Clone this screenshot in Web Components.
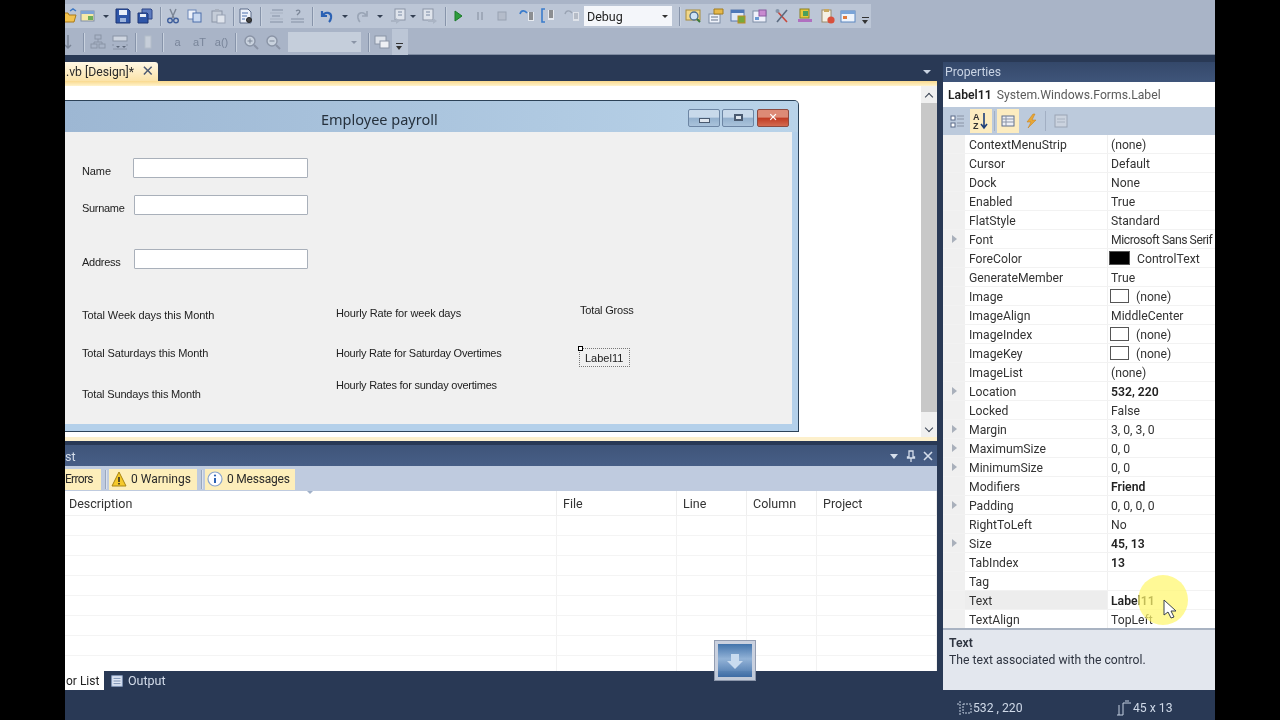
<!DOCTYPE html>
<html>
<head>
<meta charset="utf-8">
<title>Employee payroll</title>
<style>
  html, body { margin: 0; background: #000; }
  body { width: 1280px; height: 720px; overflow: hidden; font: 12px Roboto, "Noto Sans", sans-serif; color: #1e1e1e; }
</style>
</head>
<body>
<vs-app>
  <vs-toolbars slot="top"></vs-toolbars>
  <vs-docbar slot="left"></vs-docbar>
  <vs-designer slot="left">
    <form-window caption="Employee payroll">
      <form-label x="17" y="33" ls="-.1">Name</form-label>
      <form-input x="68" y="26" w="175"></form-input>
      <form-label x="17" y="70" ls="-.3">Surname</form-label>
      <form-input x="69" y="63" w="174"></form-input>
      <form-label x="17" y="124" ls="-.25">Address</form-label>
      <form-input x="69" y="117" w="174"></form-input>
      <form-label x="17" y="177" ls="-.08">Total Week days this Month</form-label>
      <form-label x="17" y="215" ls="-.13">Total Saturdays this Month</form-label>
      <form-label x="17" y="256" ls="-.17">Total Sundays this Month</form-label>
      <form-label x="271" y="175" ls="-.16">Hourly Rate for week days</form-label>
      <form-label x="271" y="215" ls="-.26">Hourly Rate for Saturday Overtimes</form-label>
      <form-label x="271" y="247" ls="-.24">Hourly Rates for sunday overtimes</form-label>
      <form-label x="515" y="172" ls="-.18">Total Gross</form-label>
      <form-label x="519" y="219" selected>Label11</form-label>
    </form-window>
  </vs-designer>
  <vs-errorlist slot="left"></vs-errorlist>
  <vs-bottomtabs slot="left"></vs-bottomtabs>
  <vs-properties slot="right">
    <prop-row name="ContextMenuStrip" value="(none)"></prop-row>
    <prop-row name="Cursor" value="Default"></prop-row>
    <prop-row name="Dock" value="None"></prop-row>
    <prop-row name="Enabled" value="True"></prop-row>
    <prop-row name="FlatStyle" value="Standard"></prop-row>
    <prop-row name="Font" value="Microsoft Sans Serif" expand ls="-.45"></prop-row>
    <prop-row name="ForeColor" value="ControlText" swatch="#000"></prop-row>
    <prop-row name="GenerateMember" value="True"></prop-row>
    <prop-row name="Image" value="(none)" swatch="#fff"></prop-row>
    <prop-row name="ImageAlign" value="MiddleCenter"></prop-row>
    <prop-row name="ImageIndex" value="(none)" swatch="#fff"></prop-row>
    <prop-row name="ImageKey" value="(none)" swatch="#fff"></prop-row>
    <prop-row name="ImageList" value="(none)"></prop-row>
    <prop-row name="Location" value="532, 220" expand bold></prop-row>
    <prop-row name="Locked" value="False"></prop-row>
    <prop-row name="Margin" value="3, 0, 3, 0" expand></prop-row>
    <prop-row name="MaximumSize" value="0, 0" expand></prop-row>
    <prop-row name="MinimumSize" value="0, 0" expand></prop-row>
    <prop-row name="Modifiers" value="Friend" bold></prop-row>
    <prop-row name="Padding" value="0, 0, 0, 0" expand></prop-row>
    <prop-row name="RightToLeft" value="No"></prop-row>
    <prop-row name="Size" value="45, 13" expand bold></prop-row>
    <prop-row name="TabIndex" value="13" bold></prop-row>
    <prop-row name="Tag" value=""></prop-row>
    <prop-row name="Text" value="Label11" bold active></prop-row>
    <prop-row name="TextAlign" value="TopLeft"></prop-row>
  </vs-properties>
</vs-app>

<script>
// 16x16 toolbar glyphs
const ICONS = {
  folder: '<path d="M1 5h5l1 2h7l-2 7H1z" fill="#f2c24e" stroke="#a97b1c"/><path d="M8 3l3-2 3 2" fill="none" stroke="#3d78c4" stroke-width="1.5"/>',
  newproj: '<rect x="1" y="3" width="13" height="10" fill="#f6e9a8" stroke="#7f8ea6"/><rect x="1" y="3" width="13" height="3" fill="#7fa3d4"/><rect x="8" y="8" width="5" height="4" fill="#6fae5a"/>',
  save: '<path d="M1 1h12l2 2v12H1z" fill="#2f56a8" stroke="#1d3474"/><rect x="4" y="2" width="8" height="5" fill="#e8eef8"/><rect x="5" y="10" width="6" height="4" fill="#9db4dc"/>',
  saveall: '<path d="M5 1h9l1 1v9H5z" fill="#5e7cc0" stroke="#2c4486"/><path d="M1 5h9l1 1v9H1z" fill="#2f56a8" stroke="#1d3474"/><rect x="3" y="6" width="6" height="3" fill="#e8eef8"/>',
  cut: '<path d="M5 1l4 9M11 1l-4 9" stroke="#7a8494" stroke-width="1.4" fill="none"/><circle cx="5" cy="12.5" r="2.3" fill="none" stroke="#3e5e9c" stroke-width="1.4"/><circle cx="11" cy="12.5" r="2.3" fill="none" stroke="#3e5e9c" stroke-width="1.4"/>',
  copy: '<rect x="1" y="2" width="8" height="9" fill="#eef2fa" stroke="#6b86b8"/><rect x="6" y="5" width="8" height="9" fill="#c8d8f0" stroke="#4d6eaa"/>',
  paste: '<rect x="2" y="3" width="10" height="11" fill="#c4ccd8" stroke="#8a94a6"/><rect x="5" y="1" width="4" height="3" fill="#a8b0be"/><rect x="7" y="7" width="8" height="8" fill="#dfe4ec" stroke="#98a2b4"/>',
  find: '<path d="M2 1h8l3 3v11H2z" fill="#eef2fa" stroke="#5a6a88"/><path d="M4 5h6M4 8h5M4 11h3" stroke="#4d6eaa"/><circle cx="11" cy="12" r="2.5" fill="#444" stroke="#222"/>',
  lines: '<path d="M3 2h11M3 8h8M1 14h13" stroke="#8490a4" stroke-width="1.2" fill="none"/><path d="M1 5h13M1 11h13" stroke="#a8b2c2" fill="none"/>',
  comment: '<path d="M1 14h13M1 11h13" stroke="#8490a4" fill="none"/><path d="M6 3c3-2 5 0 3 2L7 7M7 9h.1" stroke="#7c8798" stroke-width="1.3" fill="none"/>',
  undo: '<path d="M3 3v5h5M3.5 8C6 3 13 4 12 10c-.3 1.5-1 3-2 4" fill="none" stroke="#2c62b4" stroke-width="2.2"/>',
  redo: '<path d="M13 3v5H8M12.5 8C10 3 3 4 4 10c.3 1.5 1 3 2 4" fill="none" stroke="#9aa5b6" stroke-width="1.7"/>',
  drop: '<path d="M5 7h6l-3 3z" fill="#333f52"/>',
  navb: '<rect x="5" y="1" width="10" height="11" fill="#dfe4ec" stroke="#8a94a6"/><path d="M8 4h4M8 7h4" stroke="#7a8aa4"/><path d="M1 12h5v-2l4 3-4 3v-2H1z" fill="#aab4c4"/>',
  navf: '<rect x="1" y="1" width="10" height="11" fill="#dfe4ec" stroke="#8a94a6"/><path d="M4 4h4M4 7h4" stroke="#7a8aa4"/><path d="M6 12h5v-2l4 3-4 3v-2H6z" fill="#aab4c4"/>',
  play: '<path d="M5 3l7 5-7 5z" fill="#2d9c3c" stroke="#1c7a2a"/>',
  pause: '<path d="M5 4v8M9 4v8" stroke="#98a2b2" stroke-width="1.6"/>',
  stop: '<rect x="4" y="4" width="8" height="8" fill="#b4bcca" stroke="#98a2b2"/>',
  step1: '<rect x="9" y="4" width="6" height="9" fill="#e6eaf0"/><path d="M10 5h4M10 7h4M10 9h4M10 11h4" stroke="#333"/><path d="M1 6c1-4 5-4 7-1" fill="none" stroke="#3a7ccc" stroke-width="1.6"/>',
  step2: '<rect x="9" y="2" width="6" height="10" fill="#e6eaf0"/><path d="M10 3h4M10 5h4M10 7h4M10 9h4" stroke="#333"/><path d="M6 1H3v13h3" fill="none" stroke="#3a7ccc" stroke-width="1.6"/>',
  step3: '<rect x="9" y="4" width="6" height="9" fill="#dfe3ea"/><path d="M10 6h4M10 8h4M10 10h4" stroke="#8c95a4"/><path d="M1 6c1-4 5-4 7-1" fill="none" stroke="#98a2b2" stroke-width="1.4"/>',
  search: '<rect x="1" y="2" width="14" height="10" fill="#f0d78a" stroke="#a88b3a"/><circle cx="9" cy="8" r="4" fill="#cfe4f6" stroke="#4d6e8e" stroke-width="1.3"/><path d="M12 11l3 3" stroke="#3d7a3a" stroke-width="2"/>',
  props: '<rect x="1" y="6" width="11" height="9" fill="#eef2fa" stroke="#7f8ea6"/><path d="M3 9h7M3 12h7" stroke="#66758c"/><path d="M6 1h9v5H6z" fill="#e6b84a" stroke="#a07c20"/>',
  explorer: '<rect x="1" y="2" width="13" height="11" fill="#dfe8f6" stroke="#5a78aa"/><rect x="1" y="2" width="13" height="3" fill="#4d78b8"/><rect x="8" y="8" width="7" height="7" fill="#78a83c" stroke="#c08a20"/>',
  class: '<rect x="1" y="3" width="13" height="11" fill="#eef0fa" stroke="#7f8ea6"/><rect x="7" y="2" width="7" height="6" fill="#c88ad0" stroke="#8a5aa0"/><rect x="3" y="9" width="4" height="3" fill="#6a9ad4"/>',
  tools: '<path d="M3 3l10 11" stroke="#c8473a" stroke-width="1.6"/><path d="M13 2L3 14" stroke="#5c6b80" stroke-width="1.6"/><circle cx="3.5" cy="3" r="2" fill="#8796aa"/>',
  db: '<rect x="3" y="1" width="9" height="9" fill="#e8c83c" stroke="#8a8020"/><rect x="6" y="3" width="5" height="5" fill="#4aa05c"/><rect x="1" y="11" width="14" height="3" fill="#b070c0"/>',
  clip: '<rect x="3" y="2" width="9" height="12" fill="#f4f0e4" stroke="#9a8a6a"/><rect x="5" y="1" width="5" height="3" fill="#c8a860"/><circle cx="12" cy="12" r="3.6" fill="#d8503c"/>',
  win: '<rect x="1" y="3" width="14" height="11" fill="#eef4fc" stroke="#5a86c0"/><rect x="1" y="3" width="14" height="3" fill="#7aa4d8"/><rect x="3" y="8" width="4" height="3" fill="#e07a3c"/>',
  sortup: '<path d="M1 2v12" stroke="#8a94a6" stroke-width="1.2"/><path d="M6 1v13M3 11l3 3 3-3" stroke="#7a8496" fill="none" stroke-width="1.5"/>',
  org: '<rect x="5" y="1" width="6" height="4" fill="none" stroke="#8a94a6"/><rect x="1" y="10" width="6" height="4" fill="none" stroke="#8a94a6"/><rect x="9" y="10" width="6" height="4" fill="none" stroke="#8a94a6"/><path d="M8 5v3M4 10V8h8v2" fill="none" stroke="#8a94a6"/>',
  table: '<rect x="1" y="2" width="14" height="5" fill="#ced5e0" stroke="#8a94a6"/><path d="M1 10v2M15 10v2M1 15h14" stroke="#8a94a6"/><path d="M4 12l2 2 2-2M10 12l2 2 2-2" fill="#5c6678"/>',
  faint: '<rect x="5" y="2" width="6" height="12" fill="#c6ced9" stroke="#b4bdca"/>',
  zoomin: '<circle cx="7" cy="7" r="5" fill="#c9d2de" stroke="#8a94a6" stroke-width="1.4"/><path d="M4.5 7h5M7 4.5v5" stroke="#7c8798"/><path d="M11 11l4 4" stroke="#8a94a6" stroke-width="2"/>',
  zoomout: '<circle cx="7" cy="7" r="5" fill="#c9d2de" stroke="#8a94a6" stroke-width="1.4"/><path d="M4.5 7h5" stroke="#7c8798"/><path d="M11 11l4 4" stroke="#8a94a6" stroke-width="2"/>',
  layer: '<rect x="1" y="2" width="11" height="8" fill="#dde2ea" stroke="#8a94a6"/><rect x="6" y="7" width="9" height="7" fill="#eef0f4" stroke="#8a94a6"/>',
  cat: '<rect x="1" y="3" width="4" height="4" fill="#fff" stroke="#5a6a88"/><rect x="1" y="10" width="4" height="4" fill="#fff" stroke="#5a6a88"/><path d="M7 3h7M7 6h7M7 10h7M7 13h7" stroke="#8a94a6"/>',
  grid: '<rect x="2" y="3" width="12" height="10" fill="#eef0f6" stroke="#5f6f8c"/><path d="M2 6h12M2 9h12M6 3v10" stroke="#8a94a6"/>',
  bolt: '<path d="M10 1L4 9h4l-3 6 8-8H9l3-6z" fill="#e8a838" stroke="#c87c10" stroke-width=".5"/>',
  pages: '<rect x="2" y="2" width="12" height="12" fill="#cbd3df" stroke="#9aa4b4"/><path d="M4 6h8M4 9h8" stroke="#a8b2c0"/>',
  output: '<rect x="2" y="2" width="12" height="12" fill="#dfe7f4" stroke="#8ea4c8"/><path d="M4 5h8M4 8h8M4 11h8" stroke="#6a82a8"/>',
  warn: '<path d="M8 1l7 14H1z" fill="#f5c92a" stroke="#a88410"/><path d="M8 6v5M8 12v1.6" stroke="#222" stroke-width="1.5"/>',
  info: '<circle cx="8" cy="8" r="7" fill="#fdfdff" stroke="#8aa4cc" stroke-width="1.2"/><path d="M8 7v5" stroke="#2c62b4" stroke-width="2"/><circle cx="8" cy="4.5" r="1.1" fill="#2c62b4"/>',
  moveXY: '<path d="M4 1v14M1 4h3M7 4h8v9H7z" fill="none" stroke="#c3cfe0" stroke-dasharray="2 1"/>',
  sizeXY: '<path d="M7 3h8M7 3v12M1 15h6M3 5v10M9 1h4" fill="none" stroke="#c3cfe0"/>'
};
function svg(name, size = 16) {
  return `<svg width="${size}" height="${size}" viewBox="0 0 16 16" style="display:block;flex:none">${ICONS[name]}</svg>`;
}

class VsApp extends HTMLElement {
  constructor() {
    super();
    this.attachShadow({ mode: 'open' });
    this.shadowRoot.innerHTML = `
      <style>
        :host { display: flex; flex-direction: column; width: 1150px; height: 720px; margin-left: 65px; background: #293955; overflow: hidden; position: relative; filter: blur(.4px); }
        .work { display: flex; flex: 1; min-height: 0; }
        .left { display: flex; flex-direction: column; width: 872px; }
        .right { display: flex; flex-direction: column; width: 272px; margin-left: 6px; padding-top: 7px; box-sizing: border-box; }
      </style>
      <slot name="top"></slot>
      <div class="work">
        <div class="left"><slot name="left"></slot></div>
        <div class="right"><slot name="right"></slot></div>
      </div>`;
  }
}

// row 1 and row 2 items: [kind, centre x in the page, ...]
const ROW1 = [['folder',70],['newproj',88],['drop',106],['save',123],['saveall',145],['sep',160],['cut',173],['copy',195],['paste',218],['sep',233],['find',246],['sep',260],['lines',277],['comment',298],['sep',312],['undo',327],['drop',345],['redo',362],['drop',380],['navb',398],['drop',413],['navf',430],['sep',445],['play',458],['pause',481],['stop',502],['step1',527],['step2',547],['step3',572]];
const ROW1B = [['sep',679],['search',693],['props',716],['explorer',738],['class',760],['tools',782],['db',805],['clip',827],['win',848]];
const ROW2 = [['sortup',70],['sep',83],['org',98],['table',120],['sep',135],['faint',148],['sep',162]];
const ROW2B = [['sep',235],['zoomin',250],['zoomout',272]];

class VsToolbars extends HTMLElement {
  constructor() {
    super();
    this.attachShadow({ mode: 'open' });
    const run = (items, from) => {
      let x = from, html = '';
      for (const [k, c] of items) {
        const w = k === 'sep' ? 1 : 16;
        html += `<span class="${k === 'sep' ? 'sep' : 'ico'}" style="margin-left:${c - w / 2 - x}px">${k === 'sep' ? '' : svg(k)}</span>`;
        x = c + w / 2;
      }
      return html;
    };
    this.shadowRoot.innerHTML = `
      <style>
        :host { display: block; height: 55px; box-sizing: border-box; background: #a9b4c7; border-bottom: 1px solid #7e8ba1; padding-top: 4px; }
        .row { display: flex; align-items: center; height: 24px; width: 806px; background: #bcc6d6; }
        .row2 { height: 26px; width: 340px; margin-top: 1px; background: #a9b4c7; position: relative; }
        .ico { display: block; flex: none; }
        .sep { display: block; flex: none; width: 1px; height: 19px; background: #8794aa; box-shadow: 1px 0 #c9d2df; }
        .combo { display: flex; align-items: center; justify-content: space-between; box-sizing: border-box; height: 20px; flex: none; background: #f4f6fa; padding: 0 4px 0 3px; color: #222; }
        .combo.off { background: #c5cedb; }
        .arrow { width: 0; height: 0; border: 3px solid transparent; border-top: 3px solid #333; border-bottom: 0; }
        .off .arrow { border-top-color: #8a94a6; }
        .grip { width: 7px; height: 6px; border-top: 1px solid #333; position: relative; flex: none; margin-top: 8px; }
        .grip::after { content: ''; position: absolute; left: 0; top: 2px; border: 3.5px solid transparent; border-top: 4px solid #333; border-bottom: 0; }
        .t { flex: none; color: #79859a; font: 11px "Liberation Sans", sans-serif; width: 22px; text-align: center; }
        .cap { flex: none; width: 16px; height: 26px; margin-left: 0; background: #bcc6d6; display: flex; justify-content: center; align-items: center; }
      </style>
      <div class="row">${run(ROW1, 65)}
        <span class="combo" style="width:88px;margin-left:${584 - 580}px;font-size:12.5px"><span>Debug</span><span class="arrow"></span></span>
        ${run(ROW1B, 672)}
        <span class="grip" style="margin-left:${862 - 856}px"></span>
      </div>
      <div class="row row2">${run(ROW2, 65)}
        <span class="t" style="margin-left:4px">a</span><span class="t" style="margin-left:0">aT</span><span class="t" style="margin-left:0">a()</span>
        ${run(ROW2B, 232)}
        <span class="combo off" style="width:73px;margin-left:7px"><span></span><span class="arrow"></span></span>
        <span class="sep" style="margin-left:7px"></span>
        <span class="ico" style="margin-left:5px">${svg('layer')}</span>
        <span class="cap" style="margin-left:2px"><span class="grip" style="margin-top:8px"></span></span>
      </div>`;
  }
}

class VsDocbar extends HTMLElement {
  constructor() {
    super();
    this.attachShadow({ mode: 'open' });
    this.shadowRoot.innerHTML = `
      <style>
        :host { display: flex; align-items: flex-end; justify-content: space-between; height: 26px; position: relative; }
        .tab { display: flex; align-items: center; justify-content: space-between; box-sizing: border-box; width: 93px; height: 19px; padding: 0 4px 0 1px; border-radius: 0 3px 0 0; background: linear-gradient(#fff8e6, #fbe3a8); color: #2a2a2a; font-size: 12.2px; }
        .x { color: #4d5a72; font: 15px "DejaVu Sans", sans-serif; line-height: 15px; }
        .menu { width: 0; height: 0; border: 4px solid transparent; border-top: 4px solid #c9d3e2; border-bottom: 0; margin: 0 6px 7px 0; }
      </style>
      <div class="tab"><span>.vb [Design]*</span><span class="x">✕</span></div>
      <span class="menu"></span>`;
  }
}

class VsDesigner extends HTMLElement {
  constructor() {
    super();
    this.attachShadow({ mode: 'open' });
    this.shadowRoot.innerHTML = `
      <style>
        :host { display: flex; flex-direction: column; height: 360px; background: #fff; }
        .top { height: 5px; flex: none; background: linear-gradient(#f9d98e, #fff3cc); }
        .bot { height: 4px; flex: none; background: #fdf0cc; }
        .body { display: flex; flex: 1; min-height: 0; }
        .canvas { flex: 1; padding-top: 14px; min-width: 0; }
        .scroll { width: 16px; display: flex; flex-direction: column; background: #f0f0f0; align-items: center; justify-content: space-between; position: relative; }
        .thumb { position: absolute; left: 0; right: 0; top: 17px; height: 309px; background: #c8c8c8; }
        .chev { width: 5px; height: 5px; border-left: 1.6px solid #3a4454; border-top: 1.6px solid #3a4454; transform: rotate(45deg); margin: 8px 0 3px; z-index: 1; }
        .chev.dn { transform: rotate(225deg); margin: 3px 0 6px; }
      </style>
      <div class="top"></div>
      <div class="body">
        <div class="canvas"><slot></slot></div>
        <div class="scroll"><span class="chev"></span><span class="thumb"></span><span class="chev dn"></span></div>
      </div>
      <div class="bot"></div>`;
  }
}

class FormWindow extends HTMLElement {
  constructor() {
    super();
    this.attachShadow({ mode: 'open' });
    this.shadowRoot.innerHTML = `
      <style>
        :host { display: block; box-sizing: border-box; width: 734px; height: 332px; border: 1px solid #2c4258; border-left: 0; border-radius: 0 5px 0 0; background: #b4d0ea; }
        .title { display: flex; align-items: center; height: 31px; position: relative; background: linear-gradient(90deg, #9db7d3, #b9d3e9); border-radius: 0 4px 0 0; }
        .caption { position: absolute; left: 256px; top: 8px; font: 14.5px/20px "Noto Sans", sans-serif; color: #26313d; }
        .btns { margin-left: auto; margin-right: 9px; display: flex; gap: 2px; margin-top: 2px; }
        .b { width: 32px; height: 18px; box-sizing: border-box; border: 1px solid #6d86a4; border-radius: 2px; background: linear-gradient(#c8d9ea 45%, #93b0cd 50%, #aac3db); display: flex; align-items: center; justify-content: center; }
        .b.c { margin-left: 1px; background: linear-gradient(#dd8a76 45%, #c03a22 50%, #d46a50); border-color: #8c4a40; }
        .min { width: 9px; height: 3px; margin-top: 5px; background: #dfe6ee; border: 1px solid #4a5a70; }
        .max { background: #dfe6ee; border: 2px solid #4a5a70; box-sizing: content-box; width: 5px; height: 3px; }
        .cx { color: #fff; font: bold 11px "DejaVu Sans", sans-serif; line-height: 11px; }
        .client { position: relative; height: 292px; width: 727px; background: #f0f0f0; }
      </style>
      <div class="title"><span class="caption"></span>
        <div class="btns"><span class="b"><i class="min"></i></span><span class="b"><i class="max"></i></span><span class="b c"><span class="cx">✕</span></span></div>
      </div>
      <div class="client"><slot></slot></div>`;
    this.shadowRoot.querySelector('.caption').textContent = this.getAttribute('caption');
  }
}

class FormLabel extends HTMLElement {
  constructor() {
    super();
    this.attachShadow({ mode: 'open' });
    this.shadowRoot.innerHTML = `
      <style>
        :host { position: absolute; display: block; white-space: nowrap; font: 11px/13px "Liberation Sans", sans-serif; color: #222; }
        .sel { display: block; }
        :host([selected]) .sel { box-sizing: border-box; width: 51px; height: 19px; margin: -3px 0 0 -5px; padding: 3px 0 0 5px; border: 1px dotted #777; position: relative; }
        :host([selected]) .sel::before { content: ''; position: absolute; left: -2px; top: -3px; width: 3px; height: 3px; background: #fff; border: 1px solid #000; }
      </style>
      <span class="sel"><slot></slot></span>`;
    this.style.left = this.getAttribute('x') + 'px';
    this.style.top = this.getAttribute('y') + 'px';
    if (this.hasAttribute('ls')) this.style.letterSpacing = this.getAttribute('ls') + 'px';
  }
}

class FormInput extends HTMLElement {
  constructor() {
    super();
    this.attachShadow({ mode: 'open' });
    this.shadowRoot.innerHTML = `
      <style>
        :host { position: absolute; display: block; box-sizing: border-box; height: 20px; background: #fff; border: 1px solid #a9b0ba; border-radius: 1px; }
      </style>`;
    this.style.left = this.getAttribute('x') + 'px';
    this.style.top = this.getAttribute('y') + 'px';
    this.style.width = this.getAttribute('w') + 'px';
  }
}

class VsErrorlist extends HTMLElement {
  constructor() {
    super();
    this.attachShadow({ mode: 'open' });
    const cols = [['Description', 492], ['File', 120], ['Line', 70], ['Column', 70], ['Project', 120]];
    const rowCells = cols.map(c => `<span style="width:${c[1]}px"></span>`).join('');
    let rows = '';
    for (let i = 0; i < 8; i++) rows += `<div class="r">${rowCells}</div>`;
    this.shadowRoot.innerHTML = `
      <style>
        :host { display: flex; flex-direction: column; height: 226px; margin-top: 4px; background: #fff; overflow: hidden; }
        .title { display: flex; align-items: center; height: 21px; background: linear-gradient(#3f557a, #475e86); color: #d5deeb; flex: none; }
        .title b { font-weight: 400; padding-top: 2px; font-size: 12.5px; }
        .tools { margin-left: auto; display: flex; align-items: center; gap: 7px; margin-right: 4px; }
        .tools svg { display: block; }
        .bar { display: flex; align-items: center; height: 25px; flex: none; background: #bfcbdf; padding-top: 1px; box-sizing: border-box; }
        .btn { display: flex; align-items: center; height: 21px; box-sizing: border-box; background: #fdeeba; color: #2a2a2a; font-size: 12px; }
        .btn svg { margin-right: 4px; }
        .sp { width: 1px; height: 19px; margin: 0 3.5px; background: #9aa7bd; box-shadow: 1px 0 #dbe2ed; }
        .head, .r { display: flex; flex: none; }
        .head { height: 25px; align-items: center; color: #333; border-bottom: 1px solid #f1f1f1; box-sizing: border-box; position: relative; font-size: 12.5px; }
        .head span { box-sizing: border-box; padding-left: 6px; height: 100%; line-height: 25px; border-right: 1px solid #eee; }
        .head span:nth-child(2) { padding-left: 4px; }
        .r { height: 20px; box-sizing: border-box; border-bottom: 1px solid #f4f4f4; }
        .r span { box-sizing: border-box; border-right: 1px solid #f2f2f2; }
        .sort { position: absolute; left: 242px; top: 0; width: 0; height: 0; border: 3px solid transparent; border-top: 3px solid #9fb0c8; border-bottom: 0; }
      </style>
      <div class="title"><b>st</b>
        <div class="tools">
          <svg width="10" height="10" viewBox="0 0 10 10"><path d="M1 3h8L5 8z" fill="#d5deeb"/></svg>
          <svg width="10" height="12" viewBox="0 0 10 12"><path d="M3 1h4v6h1.5v1h-7V7H3zM5 8v4" fill="none" stroke="#d5deeb" stroke-width="1.3"/></svg>
          <svg width="10" height="10" viewBox="0 0 10 10"><path d="M1 1l8 8M9 1l-8 8" stroke="#d5deeb" stroke-width="1.6"/></svg>
        </div>
      </div>
      <div class="bar">
        <span class="btn" style="width:36px;padding-right:8px;letter-spacing:-.7px"><span>Errors</span></span>
        <span class="sp"></span>
        <span class="btn" style="width:88px;padding-left:2px">${svg('warn')}<span>0 Warnings</span></span>
        <span class="sp"></span>
        <span class="btn" style="width:90px;padding-left:2px;letter-spacing:-.2px">${svg('info')}<span>0 Messages</span></span>
      </div>
      <div class="head"><i class="sort"></i>${cols.map(c => `<span style="width:${c[1]}px">${c[0]}</span>`).join('')}</div>
      ${rows}`;
  }
}

class VsBottomtabs extends HTMLElement {
  constructor() {
    super();
    this.attachShadow({ mode: 'open' });
    this.shadowRoot.innerHTML = `
      <style>
        :host { display: flex; align-items: flex-start; flex: 1; position: relative; color: #d3dcea; box-sizing: border-box; font-size: 12.5px; }
        .on { display: flex; align-items: center; height: 19px; width: 39px; background: #fff; color: #222; padding-left: 1px; box-sizing: border-box; font-size: 12px; }
        .off { display: flex; align-items: center; gap: 4px; height: 19px; margin-left: 6px; }
        .pop { position: absolute; left: 650px; top: -30px; width: 40px; height: 39px; box-sizing: border-box; border: 3px solid #c8d0de; outline: 1px solid #8f9aae; background: linear-gradient(#3a6ea8, #8fb0d6 45%, #3f6fa8); display: flex; align-items: center; justify-content: center; opacity: .96; }
      </style>
      <span class="on">or List</span>
      <span class="off">${svg('output', 14)}<span>Output</span></span>
      <span class="pop"><svg width="20" height="20" viewBox="0 0 20 20"><path d="M6 3h8v7h4l-8 8-8-8h4z" fill="#c7daef"/></svg></span>`;
  }
}

class VsProperties extends HTMLElement {
  constructor() {
    super();
    this.attachShadow({ mode: 'open' });
    this.shadowRoot.innerHTML = `
      <style>
        :host { display: flex; flex-direction: column; flex: 1; position: relative; overflow: hidden; font-size: 12.2px; }
        .title { height: 20px; line-height: 20px; padding-left: 2px; color: #c8d3e4; background: linear-gradient(#34486a, #3f557a); flex: none; }
        .sel { height: 25px; line-height: 27px; padding-left: 5px; background: #fff; color: #5b5b5b; flex: none; white-space: nowrap; }
        .sel b { color: #1e1e1e; font-weight: 600; margin-right: 5px; }
        .bar { display: flex; align-items: center; height: 28px; background: #bccadc; flex: none; box-sizing: border-box; padding-left: 4px; }
        .bt { display: flex; align-items: center; justify-content: center; width: 22px; height: 24px; flex: none; }
        .bt.on { background: #fcecc0; }
        .bt.on svg text { fill: #333; }
        .s { width: 1px; height: 20px; background: #a2afc3; flex: none; margin: 0 2px; }
        .grid { height: 493px; flex: none; background: #fff; }
        .desc { height: 62px; box-sizing: border-box; flex: none; background: #e3e7ee; border-top: 2px solid #a9b3c2; padding: 5px 0 0 6px; color: #2e3440; line-height: 17px; }
        .desc b { display: block; font-weight: 600; }
        .status { display: flex; flex: 1; align-items: center; color: #cfd9e8; padding-top: 6px; }
        .status span { display: flex; align-items: center; gap: 1px; }
        .glow { position: absolute; left: 195px; top: 513px; width: 50px; height: 50px; border-radius: 50%; background: rgba(255, 247, 110, .72); pointer-events: none; }
        .cur { position: absolute; left: 220px; top: 537px; }
      </style>
      <div class="title">Properties</div>
      <div class="sel"><b>Label11</b>System.Windows.Forms.Label</div>
      <div class="bar">
        <span class="bt">${svg('cat')}</span>
        <span class="bt on" style="margin-left:1px"><svg width="16" height="18" viewBox="0 0 16 18"><text x="0" y="8" font-size="9" font-family="Liberation Sans" font-weight="700">A</text><text x="0" y="17" font-size="9" font-family="Liberation Sans" font-weight="700">Z</text><path d="M11 1v14M8 12l3 4 3-4" stroke="#1d3f7a" stroke-width="1.6" fill="none"/></svg></span>
        <span class="s"></span>
        <span class="bt on" style="margin-left:0">${svg('grid')}</span>
        <span class="bt" style="margin-left:1px">${svg('bolt')}</span>
        <span class="s" style="margin-left:3px"></span>
        <span class="bt" style="margin-left:2px">${svg('pages')}</span>
      </div>
      <div class="grid"><slot></slot></div>
      <div class="desc"><b>Text</b>The text associated with the control.</div>
      <div class="status">
        <span style="margin-left:13px;width:160px">${svg('moveXY')}532 , 220</span>
        <span>${svg('sizeXY')}45 x 13</span>
      </div>
      <span class="glow"></span>
      <svg class="cur" width="15" height="21" viewBox="0 0 15 21"><path d="M1 1v15l4-3 3 6 3-1-3-6h5z" fill="#fff" stroke="#39424e" stroke-width="1"/></svg>`;
  }
}

class PropRow extends HTMLElement {
  constructor() {
    super();
    this.attachShadow({ mode: 'open' });
    const swatch = this.getAttribute('swatch');
    const black = swatch === '#000';
    this.shadowRoot.innerHTML = `
      <style>
        :host { display: flex; height: 19px; box-sizing: border-box; line-height: 20px; border-bottom: 1px solid #f2f2f2; white-space: nowrap; }
        .m { width: 22px; flex: none; background: #f0f0f0; display: flex; align-items: center; justify-content: center; }
        .m i { width: 0; height: 0; border: 4px solid transparent; border-left: 5px solid #a9b0bb; border-right: 0; }
        .n { width: 143px; flex: none; box-sizing: border-box; padding-left: 4px; border-right: 1px solid #f0f0f0; color: #333; }
        :host([active]) .n { background: #ededed; }
        .v { flex: 1; min-width: 0; overflow: hidden; display: flex; align-items: flex-start; padding-left: 3px; color: #333; }
        :host([bold]) .v { font-weight: 600; color: #222; }
        .sw { flex: none; box-sizing: border-box; height: 14px; margin: 2px 7px 0 ${black ? -2 : -1}px; width: ${black ? 21 : 19}px; border: 1px solid #555; }
      </style>
      <span class="m">${this.hasAttribute('expand') ? '<i></i>' : ''}</span>
      <span class="n"></span>
      <span class="v">${swatch ? `<span class="sw" style="background:${swatch}"></span>` : ''}<span class="t"></span></span>`;
    this.shadowRoot.querySelector('.n').textContent = this.getAttribute('name');
    const t = this.shadowRoot.querySelector('.t');
    t.textContent = this.getAttribute('value');
    if (this.hasAttribute('ls')) t.style.letterSpacing = this.getAttribute('ls') + 'px';
  }
}

customElements.define('vs-app', VsApp);
customElements.define('vs-toolbars', VsToolbars);
customElements.define('vs-docbar', VsDocbar);
customElements.define('vs-designer', VsDesigner);
customElements.define('form-window', FormWindow);
customElements.define('form-label', FormLabel);
customElements.define('form-input', FormInput);
customElements.define('vs-errorlist', VsErrorlist);
customElements.define('vs-bottomtabs', VsBottomtabs);
customElements.define('vs-properties', VsProperties);
customElements.define('prop-row', PropRow);
</script>
</body>
</html>
